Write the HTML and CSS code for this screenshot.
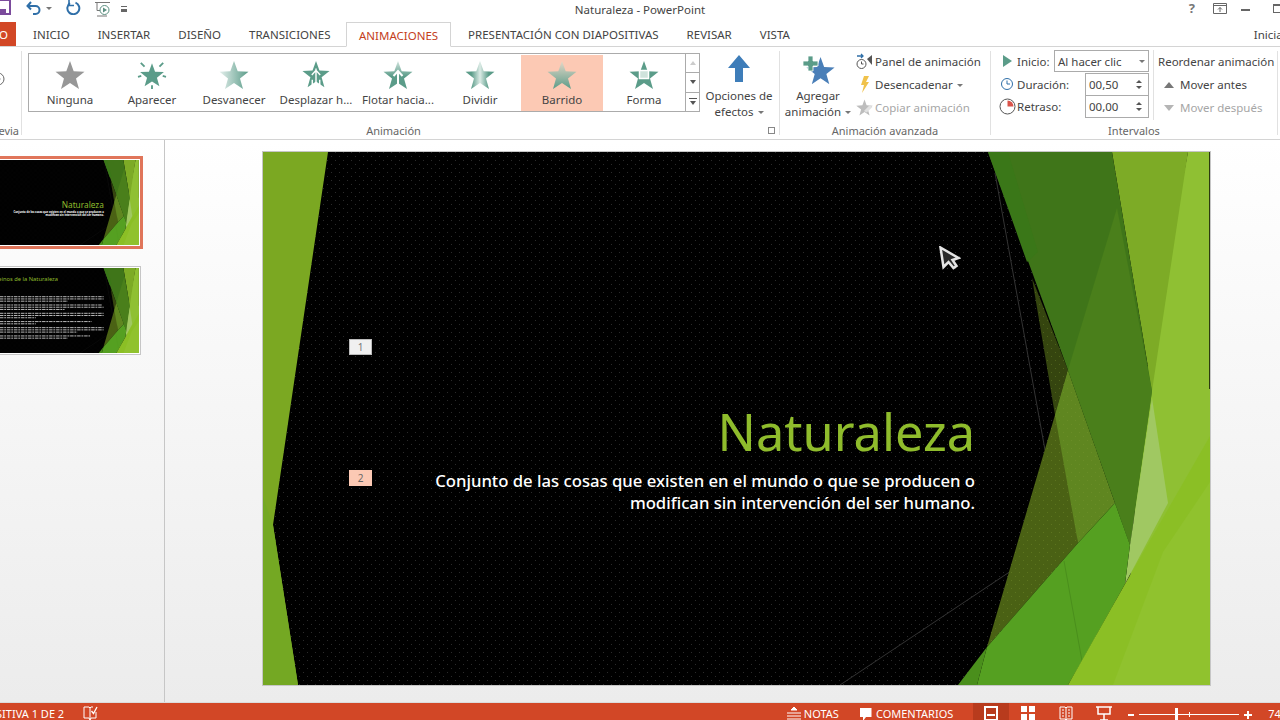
FILE: index.html
```html
<!DOCTYPE html>
<html lang="es">
<head>
    <meta charset="UTF-8">
    <title>Naturaleza - PowerPoint</title>
    <link rel="stylesheet" href="styles.css">
</head>
<body>
    <!-- shared drawings -->
    <svg class="sprites">
        <defs>
            <linearGradient id="fadeH"><stop offset="0" stop-color="#e4efec"/><stop offset="1" stop-color="#5b9c89"/></linearGradient>
            <linearGradient id="fadeV" x2="0" y2="1"><stop offset="0" stop-color="#d3e5df"/><stop offset=".55" stop-color="#5b9c89"/></linearGradient>
            <linearGradient id="wipeV" x2="0" y2="1"><stop offset="0" stop-color="#e6d8c8"/><stop offset="1" stop-color="#5b9c89"/></linearGradient>
            <linearGradient id="split"><stop offset=".2" stop-color="#5b9c89"/><stop offset=".5" stop-color="#dcebe6"/><stop offset=".8" stop-color="#5b9c89"/></linearGradient>
            <pattern id="dots" width="8" height="8" patternUnits="userSpaceOnUse">
                <rect width="1" height="1" fill="#2b2b2b"/>
                <rect x="4" y="4" width="1" height="1" fill="#2b2b2b"/>
            </pattern>
            <pattern id="dotsOlive" width="8" height="8" patternUnits="userSpaceOnUse">
                <rect width="1" height="1" fill="#7f9a33"/>
                <rect x="4" y="4" width="1" height="1" fill="#7f9a33"/>
            </pattern>
            <path id="star" d="M15 0L18.7 10.2 29.5 10.7 21 17.5 24 28 15 22 6 28 9 17.5 .5 10.7 11.3 10.2Z"/>
            <symbol id="slideArt" viewBox="0 0 947 533">
                <rect width="947" height="533" fill="#000"/>
                <rect width="947" height="533" fill="url(#dots)"/>
                <polygon points="0,0 65,0 10,373 35,533 0,533" fill="#7ba822"/>
                <polygon points="0,345 10,373 35,533 0,533" fill="#74a823"/>
                <line x1="732" y1="21" x2="782" y2="298" stroke="#333"/>
                <polyline points="577,533 745,421 852,351" fill="none" stroke="#333"/>
                <polygon points="769,126 805,218 792,263" fill="#35450f"/>
                <polygon points="792,263 805,218 815,391 724,495" fill="#4a6114"/>
                <polygon points="805,218 852,351 815,391 792,263" fill="#5f8620"/>
                <polygon points="769,126 805,218 852,351 815,391 724,495 792,263" fill="url(#dotsOlive)" opacity=".35"/>
                <polygon points="947,0 925,0 880,240 860,533 947,533" fill="#8fc033"/>
                <polygon points="849,0 925,0 889,239" fill="#7dab26"/>
                <polygon points="725,0 849,0 889,239 867,393 805,218" fill="#3f7519"/>
                <polygon points="805,218 854,56 889,239 867,393" fill="#4a7f1b"/>
                <polygon points="725,0 745,0 775,100 764,110" fill="#3a7718"/>
                <polygon points="889,246 905,351 862,432 867,393" fill="#a0c862"/>
                <polygon points="852,351 867,393 862,432 819,509 805,533 714,533 724,495 815,391" fill="#55a021"/>
                <polygon points="724,495 714,533 695,533" fill="#4a8f1c"/>
                <line x1="801" y1="409" x2="819" y2="509" stroke="#4a8f1c"/>
                <polygon points="947,284 947,533 805,533 862,432" fill="#8bbf25"/>
                <polygon points="947,330 947,533 850,533 900,400" fill="#90c22e"/>
                <line x1="946.5" y1="0" x2="946.5" y2="237" stroke="#2c3a10"/>
            </symbol>
        </defs>
    </svg>

    <div class="titlebar">
        <div class="qat">
            <svg class="save" width="16" height="15" viewBox="0 0 16 15"><path d="M1 0h14v14H1z" fill="none" stroke="#7b4b9c" stroke-width="2"/><path d="M5 9h6v5H5z" fill="#7b4b9c"/></svg>
            <svg class="qat-undo" width="16" height="14" viewBox="0 0 16 14"><path d="M5 1L1.500 5 5 8.500M2 5h7.500a4 4 0 0 1 0 8H7" fill="none" stroke="#2f6fa8" stroke-width="2"/></svg>
            <span class="caret qat-caret"></span>
            <svg class="qat-redo" width="15" height="15" viewBox="0 0 15 15"><path d="M9.500 2.600A6 6 0 1 1 4 3.200" fill="none" stroke="#2f6fa8" stroke-width="2"/><path d="M3 0v5.500h5" fill="none" stroke="#2f6fa8" stroke-width="1.600"/></svg>
            <svg class="qat-show" width="17" height="17" viewBox="0 0 17 17"><path d="M1 1.500h15M3 1.500v8h3" fill="none" stroke="#777"/><circle cx="10.500" cy="9" r="4.500" fill="none" stroke="#5b8f80"/><path d="M9 6.500l4 2.500-4 2.500z" fill="#5b8f80"/><path d="M3 15h10" stroke="#777"/></svg>
            <span class="qat-more"></span>
        </div>
        <div class="doc-title">Naturaleza - PowerPoint</div>
        <div class="win-controls">
            <span class="help">?</span>
            <svg width="14" height="11" viewBox="0 0 14 11"><path d="M.5.5h13v10H.5zM.5 2.500h13M7 9V4.500M5 6.500l2-2 2 2" fill="none" stroke="#666"/></svg>
            <span class="win-min"></span>
            <span class="win-max"></span>
        </div>
    </div>

    <div class="tabs">
        <div class="tab tab-file">ARCHIVO</div>
        <div class="tab">INICIO</div>
        <div class="tab">INSERTAR</div>
        <div class="tab">DISEÑO</div>
        <div class="tab">TRANSICIONES</div>
        <div class="tab tab-active">ANIMACIONES</div>
        <div class="tab">PRESENTACIÓN CON DIAPOSITIVAS</div>
        <div class="tab">REVISAR</div>
        <div class="tab">VISTA</div>
        <div class="signin">Iniciar sesión</div>
    </div>

    <div class="ribbon">
        <div class="group group-preview">
            <div class="group-body">
                <svg class="preview-icon" width="14" height="20" viewBox="0 0 14 20"><circle cx="5" cy="11" r="6" fill="none" stroke="#666"/><path d="M3 8l5 3-5 3z" fill="#666"/></svg>
            </div>
            <div class="group-label">Vista previa</div>
        </div>

        <div class="group group-anim">
            <div class="group-body anim-body">
                <div class="gallery">
                    <div class="gallery-item">
                        <svg class="star" viewBox="0 0 30 28"><use href="#star" fill="#979797"/></svg>
                        <span>Ninguna</span>
                    </div>
                    <div class="gallery-item">
                        <svg class="star" viewBox="0 0 30 30"><use href="#star" fill="#5b9c89" transform="translate(1.800 2.500) scale(.88)"/><path d="M3 2l4 4M27 2l-4 4M0 17l3.500-1M30 17l-3.500-1M15 30v-4" stroke="#5b9c89" stroke-width="2"/></svg>
                        <span>Aparecer</span>
                    </div>
                    <div class="gallery-item">
                        <svg class="star" viewBox="0 0 30 28"><use href="#star" fill="url(#fadeH)"/></svg>
                        <span>Desvanecer</span>
                    </div>
                    <div class="gallery-item">
                        <svg class="star" viewBox="0 0 30 30"><use href="#star" fill="#5b9c89"/><path d="M15 8v21M11 20v9M19 20v9M10.500 15l4.500-5 4.500 5" fill="none" stroke="#fff" stroke-width="1.500"/></svg>
                        <span>Desplazar h...</span>
                    </div>
                    <div class="gallery-item">
                        <svg class="star" viewBox="0 0 30 28"><use href="#star" fill="url(#fadeV)"/><path d="M15 10v13M10.500 15l4.500-5 4.500 5" fill="none" stroke="#fff" stroke-width="2"/></svg>
                        <span>Flotar hacia...</span>
                    </div>
                    <div class="gallery-item">
                        <svg class="star" viewBox="0 0 30 28"><use href="#star" fill="url(#split)"/></svg>
                        <span>Dividir</span>
                    </div>
                    <div class="gallery-item selected">
                        <svg class="star" viewBox="0 0 30 28"><use href="#star" fill="url(#wipeV)"/></svg>
                        <span>Barrido</span>
                    </div>
                    <div class="gallery-item">
                        <svg class="star" viewBox="0 0 30 28"><use href="#star" fill="#5b9c89"/><rect x="10.500" y="9.500" width="9" height="8" fill="#cfe3dc" stroke="#fff" stroke-width="1.500"/></svg>
                        <span>Forma</span>
                    </div>
                    <div class="gallery-scroll">
                        <div class="scroll-cell"><span class="tri-up"></span></div>
                        <div class="scroll-cell"><span class="tri-down"></span></div>
                        <div class="scroll-cell"><span class="tri-more"></span></div>
                    </div>
                </div>
                <div class="big-btn effects-btn">
                    <svg width="22" height="27" viewBox="0 0 22 27"><path d="M11 0l11 13h-7v14H7V13H0z" fill="#3e7db9"/></svg>
                    <span>Opciones de</span>
                    <span>efectos<i class="caret"></i></span>
                </div>
            </div>
            <div class="group-label anim-label">Animación<span class="launcher"></span></div>
        </div>

        <div class="group group-adv">
            <div class="group-body">
                <div class="big-btn add-btn">
                    <svg width="34" height="29" viewBox="0 0 34 29"><use href="#star" fill="#4a7fb8" transform="translate(5 2) scale(.97)"/><path d="M7 1h5v5h5v5h-5v5H7v-5H2V6h5z" fill="#5b9c89" stroke="#fff" stroke-width=".8"/></svg>
                    <span>Agregar</span>
                    <span>animación<i class="caret"></i></span>
                </div>
                <div class="adv-rows">
                    <div class="row">
                        <svg class="row-icon" width="17" height="17" viewBox="0 0 17 17"><path d="M1 3h6M5 1l2 2-2 2" fill="none" stroke="#2f6fa8" stroke-width="1.300"/><circle cx="5.500" cy="11" r="4.500" fill="none" stroke="#555"/><path d="M5.500 8.500V11h2" fill="none" stroke="#555"/><path d="M11 6l5-4v10z" fill="#555"/></svg>
                        <span>Panel de animación</span>
                    </div>
                    <div class="row">
                        <svg class="row-icon" width="17" height="17" viewBox="0 0 17 17"><path d="M8 0h5l-3 6h3l-7 11 2-8H5z" fill="#f0c24b"/></svg>
                        <span>Desencadenar<i class="caret"></i></span>
                    </div>
                    <div class="row disabled">
                        <svg class="row-icon" width="17" height="17" viewBox="0 0 30 28"><use href="#star" fill="#bdbdbd"/><path d="M14 20l10-10 5 3-10 10z" fill="#e2e2e2"/></svg>
                        <span>Copiar animación</span>
                    </div>
                </div>
            </div>
            <div class="group-label">Animación avanzada</div>
        </div>

        <div class="group group-timing">
            <div class="group-body">
                <div class="timing-col">
                    <div class="row timing-row">
                        <span class="timing-icon"><span class="play"></span></span>
                        <span class="timing-name">Inicio:</span>
                        <div class="field field-select">Al hacer clic<i class="caret"></i></div>
                    </div>
                    <div class="row timing-row">
                        <span class="timing-icon">
                            <svg width="14" height="14" viewBox="0 0 14 14"><circle cx="7" cy="7" r="5.500" fill="none" stroke="#2f6fa8"/><path d="M7 3.500V7h3" fill="none" stroke="#2f6fa8"/></svg>
                        </span>
                        <span class="timing-name">Duración:</span>
                        <div class="field field-spin">00,50<span class="spin"><span class="spin-up"></span><span class="spin-down"></span></span></div>
                    </div>
                    <div class="row timing-row">
                        <span class="timing-icon">
                            <svg width="17" height="17" viewBox="0 0 17 17"><circle cx="8.500" cy="8.500" r="7.500" fill="#fff" stroke="#555"/><path d="M8.500 2.500a6 6 0 0 1 6 6h-6z" fill="#d9534a"/></svg>
                        </span>
                        <span class="timing-name">Retraso:</span>
                        <div class="field field-spin">00,00<span class="spin"><span class="spin-up"></span><span class="spin-down"></span></span></div>
                    </div>
                </div>
                <div class="reorder-col">
                    <div class="row">Reordenar animación</div>
                    <div class="row reorder-row"><span class="tri-up tri-big"></span>Mover antes</div>
                    <div class="row reorder-row disabled"><span class="tri-down tri-big"></span>Mover después</div>
                </div>
            </div>
            <div class="group-label">Intervalos</div>
        </div>
    </div>

    <div class="workspace">
        <div class="thumbs">
            <div class="thumb thumb-current">
                <svg class="thumb-art" viewBox="0 0 947 533">
                    <use href="#slideArt" width="947" height="533"/>
                    <text class="thumb-title" x="727" y="298" text-anchor="end">Naturaleza</text>
                    <text class="thumb-sub" x="727" y="332" text-anchor="end">Conjunto de las cosas que existen en el mundo o que se producen o</text>
                    <text class="thumb-sub" x="727" y="354" text-anchor="end">modifican sin intervención del ser humano.</text>
                </svg>
            </div>
            <div class="thumb">
                <svg class="thumb-art" viewBox="0 0 947 533">
                    <use href="#slideArt" width="947" height="533"/>
                    <text class="thumb-title thumb-title-small" x="439" y="82" text-anchor="end">Reinos de la Naturaleza</text>
                    <path class="thumb-lines" d="M75 180H725M75 194H725M75 208H500M75 232H715M75 246H725M75 260H480M75 284H725M75 298H725M75 312H300M75 336H650M75 350H300M75 374H725M75 388H725M75 402H560M75 426H640M75 440H500"/>
                </svg>
            </div>
        </div>
        <div class="stage">
            <div class="slide">
                <svg class="slide-art" viewBox="0 0 947 533"><use href="#slideArt" width="947" height="533"/></svg>
                <div class="badge" id="badge1">1</div>
                <div class="badge badge-on" id="badge2">2</div>
                <div class="slide-text">
                    <div class="slide-title">Naturaleza</div>
                    <div class="slide-sub">Conjunto de las cosas que existen en el mundo o que se producen o<br>modifican sin intervención del ser humano.</div>
                </div>
                <svg class="pointer" width="22" height="24" viewBox="0 0 22 24"><path d="M1.500 1.500l18 10.500-6 2 4 6-3 2-5-6-5 5z" fill="#2a2a2a" stroke="#e4e4e4" stroke-width="2.500"/></svg>
            </div>
        </div>
    </div>

    <div class="statusbar">
        <span class="status-slide">DIAPOSITIVA 1 DE 2</span>
        <svg class="status-check" width="15" height="17" viewBox="0 0 15 17"><path d="M1 2h5l1 1 1-1h2M7 3v12M1 2v11h5l1 2 1-2h5V7" fill="none" stroke="#fff"/><path d="M8.500 6l2 2.500L14 2" fill="none" stroke="#fff" stroke-width="1.300"/></svg>
        <div class="status-right">
            <svg class="status-notes" width="14" height="14" viewBox="0 0 14 14"><path d="M7 0l3 3H4zM0 6h14M0 9h14M0 12h14" fill="#fff" stroke="#fff"/></svg>
            <span class="status-item">NOTAS</span>
            <svg class="status-comment" width="13" height="15" viewBox="0 0 13 15"><path d="M1 1h11.500v9H7l-3 4v-4H1z" fill="#fff"/></svg>
            <span class="status-item">COMENTARIOS</span>
            <div class="views">
                <div class="view view-active"><svg width="14" height="14" viewBox="0 0 14 14"><path d="M1 1h12v13H1zM3 9h8" fill="none" stroke="#fff" stroke-width="2"/></svg></div>
                <div class="view"><svg width="14" height="14" viewBox="0 0 14 14"><path d="M0 0h6v6H0zM8 0h6v6H8zM0 8h6v6H0zM8 8h6v6H8z" fill="#fff"/></svg></div>
                <div class="view"><svg width="14" height="14" viewBox="0 0 14 14"><path d="M1 1h5l1 1 1-1h5v12H8l-1 1-1-1H1zM7 2v11M3 4h2M3 7h2M3 10h2M9 4h2M9 7h2M9 10h2" fill="none" stroke="#fff"/></svg></div>
                <div class="view"><svg width="16" height="15" viewBox="0 0 16 15"><path d="M0 1h16M2 1v7h12V1M8 8v7M4 14h8" fill="none" stroke="#fff" stroke-width="1.500"/></svg></div>
            </div>
            <div class="zoom">
                <span class="zoom-minus"></span>
                <div class="zoom-track"><span class="zoom-tick"></span><span class="zoom-thumb"></span></div>
                <span class="zoom-plus"></span>
            </div>
            <span class="status-item zoom-pct">74%</span>
        </div>
    </div>
</body>
</html>
```

FILE: styles.css
```css
* {
    box-sizing: border-box;
}

html, body {
    margin: 0;
    height: 100%;
}

body {
    width: 1280px;
    height: 720px;
    overflow: hidden;
    display: flex;
    flex-direction: column;
    background-color: #fff;
    color: #444;
    font-family: "Noto Sans", "Open Sans", sans-serif;
    font-size: 11.5px;
}

i {
    font-style: normal;
}

.sprites {
    display: block;
    width: 0;
    height: 0;
}

.caret {
    display: inline-block;
    margin-left: 4px;
    vertical-align: middle;
    border-left: 3px solid transparent;
    border-right: 3px solid transparent;
    border-top: 3px solid #777;
}

/* title bar */
.titlebar {
    height: 22px;
    flex: none;
    display: grid;
    grid-template-columns: 1fr auto 1fr;
    align-items: start;
    overflow: hidden;
}

.qat {
    display: flex;
    align-items: flex-start;
    margin-left: -5px;
}

.qat-undo {
    margin: 1px 0 0 15px;
}

.qat-caret {
    margin: 7px 0 0 4px;
}

.qat-redo {
    margin: 0 0 0 14px;
}

.qat-show {
    margin: 1px 0 0 13px;
}

.qat-more {
    width: 6px;
    height: 6px;
    margin: 6px 0 0 10px;
    border-top: 1px solid #666;
    border-bottom: 3px solid #666;
}

.doc-title {
    color: #444;
    line-height: 19px;
}

.win-controls {
    display: flex;
    align-items: center;
    justify-content: flex-end;
    height: 16px;
    gap: 14px;
    margin-right: -3px;
}

.help {
    margin-right: 4px;
    font-weight: 700;
    font-size: 13px;
    color: #777;
}

.win-min {
    width: 9px;
    height: 2px;
    margin-top: 4px;
    background-color: #666;
}

.win-max {
    width: 10px;
    height: 9px;
    margin-left: 9px;
    border: 1px solid #666;
    border-top-width: 2px;
}

/* tabs */
.tabs {
    height: 25px;
    flex: none;
    display: flex;
    border-bottom: 1px solid #d4d4d4;
    white-space: nowrap;
}

.tab {
    height: 25px;
    padding: 0 14px;
    line-height: 25px;
    color: #444;
}

.tab-file {
    width: 66px;
    height: 24px;
    margin-left: -50px;
    padding: 0 0 0 8px;
    margin-right: 3px;
    background-color: #d24726;
    color: #fff;
}

.tab-active {
    padding: 0 12px;
    margin-left: 1.5px;
    border: 1px solid #d4d4d4;
    border-bottom-color: #fff;
    background-color: #fff;
    color: #c43e1c;
}

.tab-active + .tab {
    padding-left: 17px;
}

.signin {
    margin-left: auto;
    margin-right: -45px;
    line-height: 25px;
}

/* ribbon */
.ribbon {
    height: 93px;
    flex: none;
    display: flex;
    padding: 4px 0;
    border-bottom: 1px solid #d4d4d4;
}

.group {
    flex: none;
    display: flex;
    flex-direction: column;
    border-right: 1px solid #e1e1e1;
}

.group-body {
    height: 72px;
    flex: none;
    display: flex;
}

.group-label {
    height: 16px;
    text-align: center;
    font-size: 11px;
    line-height: 16px;
    color: #666;
    white-space: nowrap;
}

.group-preview {
    width: 82px;
    margin-left: -60px;
}

.group-preview .group-label {
    text-align: right;
    padding-right: 2px;
}

.preview-icon {
    margin: 17px 0 0 53px;
}

.group-anim {
    width: 758px;
}

.anim-body {
    padding: 2px 0 0 6px;
}

.anim-label {
    position: relative;
    padding-right: 14px;
}

.launcher {
    position: absolute;
    right: 4px;
    top: 4px;
    width: 7px;
    height: 7px;
    border-left: 1px solid #888;
    border-top: 1px solid #888;
    box-shadow: inset -2px -2px 0 -1px #888;
}

.gallery {
    width: 672px;
    height: 59px;
    flex: none;
    display: flex;
    border: 1px solid #ababab;
}

.gallery-item {
    width: 82px;
    height: 57px;
    flex: none;
    display: flex;
    flex-direction: column;
    align-items: center;
    padding-top: 7px;
    white-space: nowrap;
}

.gallery-item.selected {
    background-color: #fcc9b4;
    margin-top: 1px;
    height: 56px;
    padding-top: 6px;
}

.star {
    width: 30px;
    height: 28px;
    flex: none;
    margin-bottom: 3px;
}

.gallery-scroll {
    width: 15px;
    margin-left: auto;
    display: flex;
    flex-direction: column;
    border-left: 1px solid #ababab;
}

.scroll-cell {
    flex: 1;
    display: flex;
    align-items: center;
    justify-content: center;
    border-bottom: 1px solid #ababab;
}

.scroll-cell:last-child {
    border-bottom: none;
}

.tri-up {
    border-left: 3px solid transparent;
    border-right: 3px solid transparent;
    border-bottom: 4px solid #ccc;
}

.tri-down {
    border-left: 3px solid transparent;
    border-right: 3px solid transparent;
    border-top: 4px solid #555;
}

.tri-more {
    display: flex;
    justify-content: center;
    width: 8px;
    padding-top: 2px;
    border-top: 1px solid #555;
}

.tri-more::after {
    content: "";
    border-left: 3px solid transparent;
    border-right: 3px solid transparent;
    border-top: 4px solid #555;
}

.big-btn {
    display: flex;
    flex-direction: column;
    align-items: center;
    line-height: 16px;
    white-space: nowrap;
}

.effects-btn {
    width: 78px;
    margin-top: 2px;
}

.effects-btn svg {
    margin-bottom: 6px;
}

.group-adv {
    width: 211px;
}

.add-btn {
    width: 76px;
    margin-top: 4px;
}

.add-btn svg {
    margin-bottom: 4px;
}

.adv-rows {
    display: flex;
    flex-direction: column;
    margin-top: -1px;
}

.row {
    height: 23px;
    display: flex;
    align-items: center;
    white-space: nowrap;
}

.adv-rows .row span {
    margin-left: 2px;
}

.row-icon {
    flex: none;
}

.disabled {
    color: #a6a6a6;
}

.group-timing {
    width: 287px;
}

.timing-col {
    width: 163px;
    padding: 0 4px 0 6px;
    margin: -1px 0 3px;
    border-right: 1px solid #e1e1e1;
}

.timing-row {
    height: 22.7px;
}

.timing-icon {
    width: 20px;
    flex: none;
    display: flex;
    justify-content: center;
}

.play {
    border-top: 6px solid transparent;
    border-bottom: 6px solid transparent;
    border-left: 9px solid #5b9c89;
}

.timing-name {
    margin-right: auto;
}

.field {
    display: flex;
    align-items: center;
    justify-content: space-between;
    padding: 0 3px;
    border: 1px solid #ababab;
    background-color: #fff;
}

.field-select {
    width: 95px;
    height: 22px;
}

.field-spin {
    width: 64px;
    height: 23px;
}

.spin {
    display: flex;
    flex-direction: column;
    gap: 3px;
    margin-right: 3px;
}

.spin-up {
    border-left: 3px solid transparent;
    border-right: 3px solid transparent;
    border-bottom: 3px solid #555;
}

.spin-down {
    border-left: 3px solid transparent;
    border-right: 3px solid transparent;
    border-top: 3px solid #555;
}

.reorder-col {
    padding-left: 4px;
    margin-top: -1px;
}

.reorder-row {
    padding-left: 6px;
    gap: 6px;
}

.tri-big {
    border-left-width: 5px;
    border-right-width: 5px;
}

.tri-big.tri-up {
    border-bottom: 6px solid #777;
}

.tri-big.tri-down {
    border-top: 6px solid #b5b5b5;
}

/* panes */
.workspace {
    flex: 1;
    min-height: 0;
    display: flex;
    background: linear-gradient(#fff, #ececec);
    border-bottom: 1px solid #dcdcdc;
}

.thumbs {
    width: 165px;
    flex: none;
    display: flex;
    flex-direction: column;
    align-items: flex-end;
    padding: 16px 21px 0 0;
    gap: 17px;
    overflow: hidden;
    border-right: 1px solid #c6c6c6;
}

.thumb {
    flex: none;
    margin-right: 2px;
    padding: 1px;
    border: 1px solid #c6c6c6;
    background-color: #fff;
}

.thumb-current {
    margin-right: 0;
    border: 3px solid #e0755a;
}

.thumb-art {
    display: block;
    width: 151px;
    height: 85px;
}

.thumb-title {
    font-size: 52px;
    fill: #8fbc2c;
}

.thumb-title-small {
    font-size: 36px;
}

.thumb-sub {
    font-size: 17px;
    font-weight: 700;
    fill: #fff;
}

.thumb-lines {
    fill: none;
    stroke: #e8e8e8;
    stroke-width: 5;
    stroke-dasharray: 22 5 12 5;
}

.stage {
    flex: 1;
    padding: 12px 0 0 98px;
}

.slide {
    position: relative;
    width: 947px;
    height: 533px;
    box-shadow: 0 0 0 1px #c6c6c6;
}

.slide-art {
    display: block;
    width: 947px;
    height: 533px;
}

.badge {
    position: absolute;
    left: 86px;
    width: 23px;
    height: 16px;
    text-align: center;
    font-size: 10px;
    line-height: 15px;
    color: #777;
    background-color: #f0f0f0;
    border: 1px solid #bbb;
}

#badge1 {
    top: 187px;
}

#badge2 {
    top: 318px;
}

.badge-on {
    background-color: #fcc9b4;
    border-color: #fcc9b4;
    color: #666;
}

.slide-text {
    position: absolute;
    right: 235px;
    top: 246px;
    text-align: right;
    white-space: nowrap;
}

.slide-title {
    height: 72px;
    font-size: 50.5px;
    line-height: 68px;
    color: #8fbc2c;
}

.slide-sub {
    font-size: 16.7px;
    font-weight: 500;
    line-height: 22px;
    color: #fff;
}

.pointer {
    position: absolute;
    left: 676px;
    top: 94px;
}

/* status bar */
.statusbar {
    height: 17px;
    flex: none;
    display: flex;
    align-items: flex-start;
    background-color: #d24726;
    color: #fff;
    overflow: hidden;
    white-space: nowrap;
    font-size: 11px;
}

.status-slide {
    margin-left: -38px;
    line-height: 22px;
}

.status-check {
    margin: 2px 0 0 19px;
}

.status-item {
    line-height: 22px;
}

.status-right {
    margin-left: auto;
    display: flex;
    align-items: flex-start;
    margin-right: -10px;
}

.status-notes {
    margin: 4px 3px 0 0;
}

.status-comment {
    margin: 4px 4px 0 20px;
}

.views {
    display: flex;
    margin-left: 20px;
}

.view {
    width: 38px;
    height: 17px;
    display: flex;
    justify-content: center;
    padding-top: 3px;
}

.view-active {
    width: 36px;
    background-color: #b83b1d;
}

.zoom {
    display: flex;
    align-items: center;
    height: 17px;
    margin: 3px 0 0 5px;
}

.zoom-minus {
    width: 6px;
    height: 2px;
    background-color: #fff;
}

.zoom-track {
    position: relative;
    width: 100px;
    height: 1px;
    margin: 0 5px;
    background-color: #fff;
}

.zoom-tick {
    position: absolute;
    left: 50px;
    top: -2px;
    width: 1px;
    height: 5px;
    background-color: #fff;
}

.zoom-thumb {
    position: absolute;
    left: 36px;
    top: -6px;
    width: 3px;
    height: 14px;
    background-color: #fff;
}

.zoom-plus {
    width: 8px;
    height: 8px;
    background: linear-gradient(#fff, #fff) center / 8px 2px no-repeat,
        linear-gradient(#fff, #fff) center / 2px 8px no-repeat;
}

.zoom-pct {
    margin-left: 16px;
}
```
